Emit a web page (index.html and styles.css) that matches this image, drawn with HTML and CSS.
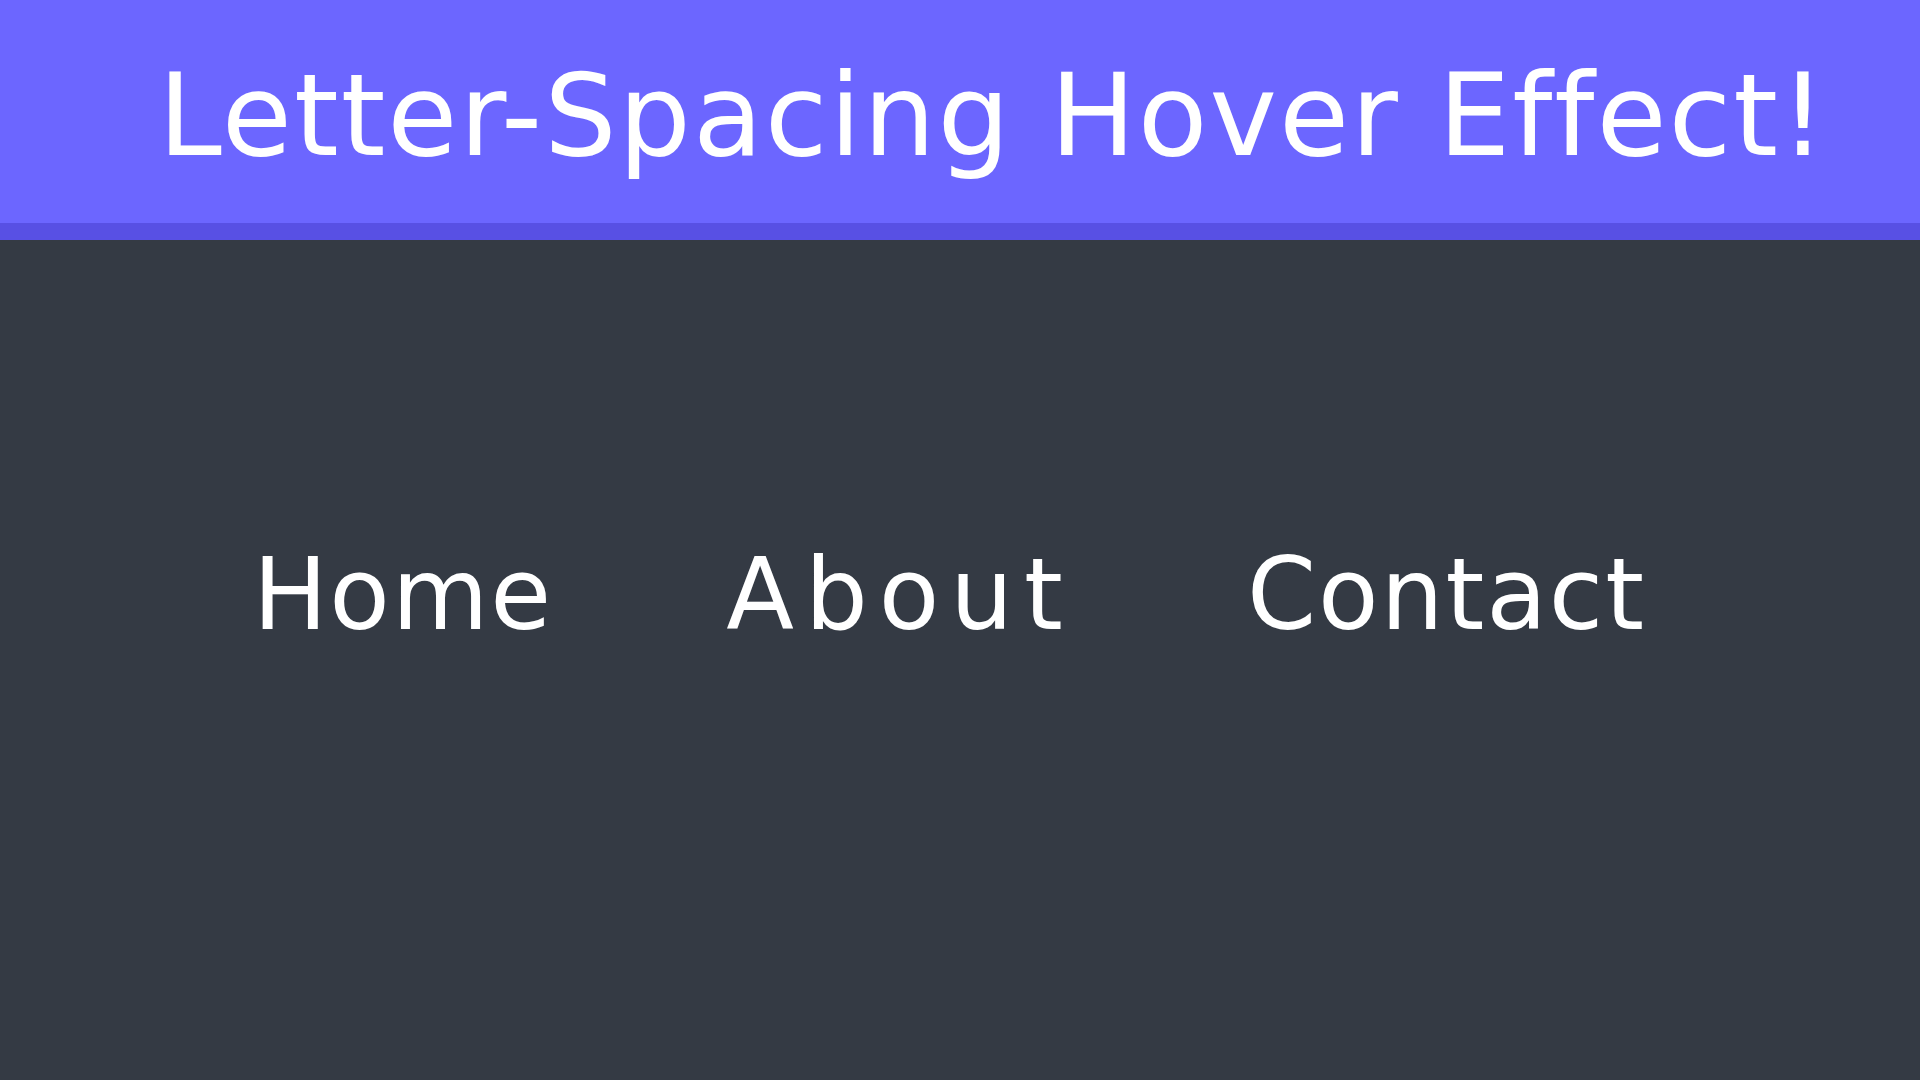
FILE: index.html
```html
<!DOCTYPE html>
<html lang="en">
<head>
<meta charset="utf-8">
<title>Letter-Spacing Hover Effect</title>
<link rel="stylesheet" href="styles.css">
</head>
<body>
  <header class="banner">
    <h1 class="banner-title">Letter-Spacing Hover Effect!</h1>
  </header>
  <main class="stage">
    <nav class="menu">
      <a class="menu-link" href="#">Home</a>
      <a class="menu-link is-hovered" href="#">About</a>
      <a class="menu-link" href="#">Contact</a>
    </nav>
  </main>
</body>
</html>
```
FILE: styles.css
```css
* {
  box-sizing: border-box;
}

html,
body {
  height: 100%;
}

body {
  margin: 0;
  background: #343a44;
  color: #ffffff;
  font-family: "DejaVu Sans", "Open Sans", sans-serif;
  display: flex;
  flex-direction: column;
  overflow: hidden;
}

.banner {
  height: 240px;
  padding: 59px 0 0 66px;
  background: #6c66ff;
  border-bottom: 17px solid #5850e4;
  display: flex;
  justify-content: center;
}

.banner-title {
  margin: 0;
  font-size: 114px;
  font-weight: 400;
  line-height: 1;
  letter-spacing: 2px;
  white-space: nowrap;
}

.stage {
  flex: 1;
  display: flex;
  justify-content: center;
  padding: 305px 21px 0 0;
}

.menu {
  display: flex;
  gap: 173px;
  height: 99px;
}

.menu-link {
  color: #ffffff;
  text-decoration: none;
  font-size: 99px;
  line-height: 1;
  letter-spacing: 2px;
  transition: letter-spacing 0.3s ease;
}

.menu-link:hover,
.menu-link.is-hovered {
  letter-spacing: 11px;
}
```
